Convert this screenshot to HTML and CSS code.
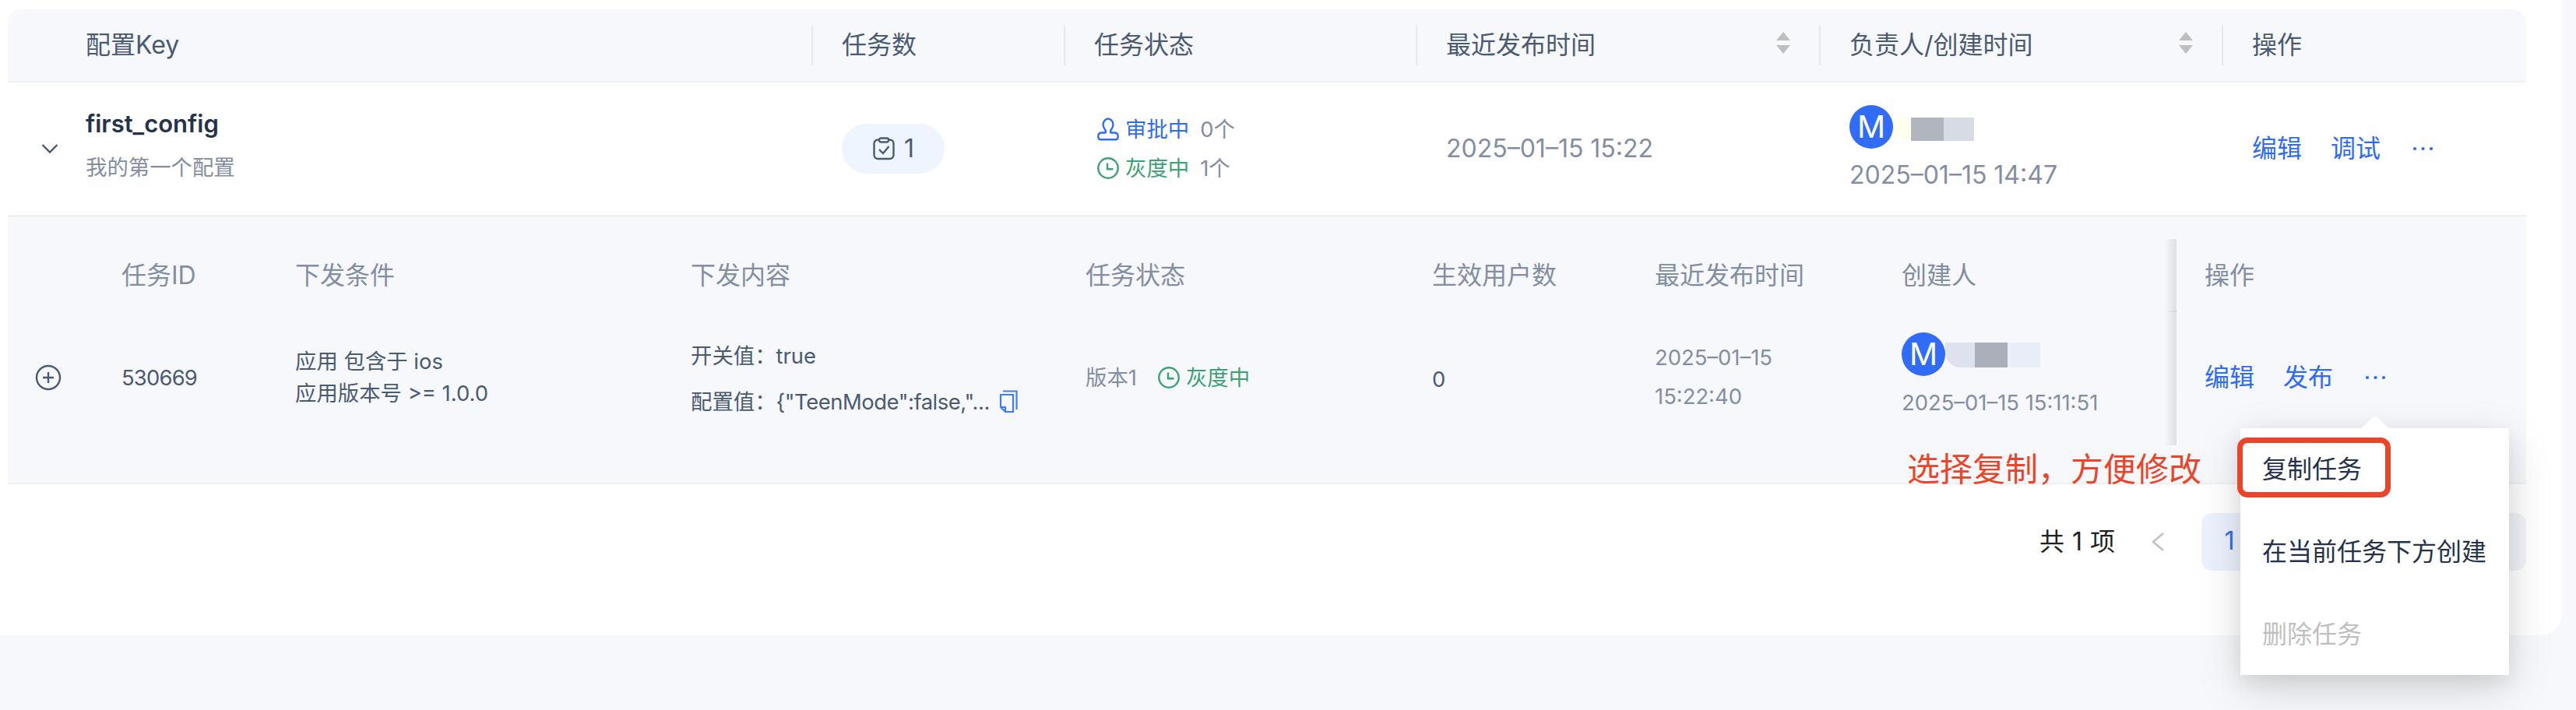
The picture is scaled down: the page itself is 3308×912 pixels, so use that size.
FILE: index.html
```
<!DOCTYPE html>
<html lang="zh-CN">
<head>
    <meta charset="UTF-8">
    <meta name="viewport" content="width=device-width, initial-scale=1.0">
    <title>配置列表</title>
    <link rel="stylesheet" href="styles.css">
</head>
<body>
    <svg class="sprite" width="0" height="0">
        <symbol id="icon-clock" viewBox="0 0 28 28">
            <circle cx="14" cy="14" r="12.7" />
            <path d="M13 7.5v7.7h7.5" />
        </symbol>
        <symbol id="icon-sort" viewBox="0 0 18 28">
            <path d="M9 0l9 11H0z M0 17h18L9 28z" />
        </symbol>
        <symbol id="icon-more" viewBox="0 0 28 6">
            <circle cx="3" cy="3" r="2.1" />
            <circle cx="13.5" cy="3" r="2.1" />
            <circle cx="24" cy="3" r="2.1" />
        </symbol>
    </svg>
    <main class="card">
        <section class="table">
            <div class="row head">
                <div></div>
                <div class="th first">配置Key</div>
                <div class="th">任务数</div>
                <div class="th">任务状态</div>
                <div class="th">最近发布时间 <svg class="sort"><use href="#icon-sort" /></svg></div>
                <div class="th">负责人/创建时间 <svg class="sort"><use href="#icon-sort" /></svg></div>
                <div class="th">操作</div>
            </div>
            <div class="row config">
                <div class="expand">
                    <svg width="22" height="14" viewBox="0 0 22 14"><path d="M1.5 2L11 11.5 20.5 2" /></svg>
                </div>
                <div class="key">
                    <div class="name">first_config</div>
                    <div class="desc">我的第一个配置</div>
                </div>
                <div class="td">
                    <span class="pill">
                        <svg width="28" height="30" viewBox="0 0 28 30">
                            <path d="M8 3.5H6.5a5 5 0 0 0-5 5v14.500a5 5 0 0 0 5 5h15a5 5 0 0 0 5-5V8.500a5 5 0 0 0-5-5H20" />
                            <rect x="8" y="1.500" width="12" height="5" rx="2.200" />
                            <path d="M8 16l5 5 7.500-9" />
                        </svg>
                        1
                    </span>
                </div>
                <div class="td states">
                    <div class="state blue">
                        <svg width="28" height="30" viewBox="0 0 28 30">
                            <path d="M10.500 19.500c1.200-1.600.7-2.700-.9-4.700-1.200-1.600-2-3.400-2-5.600a6.400 7.700 0 0 1 12.800 0c0 2.200-.8 4-2 5.600-1.600 2-2.100 3.100-.9 4.700h4.500c2.800 0 4.700 1.800 4.700 4.500 0 3-1.300 4.300-3.200 4.300h-19c-1.900 0-3.200-1.300-3.200-4.300 0-2.700 1.900-4.500 4.700-4.500z" />
                        </svg>
                        <b>审批中</b><span>0个</span>
                    </div>
                    <div class="state green">
                        <svg width="28" height="28"><use href="#icon-clock" /></svg>
                        <b>灰度中</b><span>1个</span>
                    </div>
                </div>
                <div class="td date">2025–01–15 15:22</div>
                <div class="td owner">
                    <div class="user"><span class="avatar">M</span><i class="mask mask-a"></i></div>
                    <div class="date">2025–01–15 14:47</div>
                </div>
                <div class="td links">
                    <a>编辑</a><a>调试</a><svg class="more config-more"><use href="#icon-more" /></svg>
                </div>
            </div>

            <div class="nested">
                <div class="sub sub-head">
                    <div></div>
                    <div>任务ID</div>
                    <div>下发条件</div>
                    <div>下发内容</div>
                    <div>任务状态</div>
                    <div>生效用户数</div>
                    <div>最近发布时间</div>
                    <div>创建人</div>
                    <div class="fixed">操作</div>
                </div>
                <div class="sub sub-body">
                    <div class="plus">
                        <svg width="34" height="34" viewBox="0 0 34 34"><circle cx="17" cy="17" r="15" /><path d="M17 10v14M10 17h14" /></svg>
                    </div>
                    <div class="task-id">530669</div>
                    <div class="rules">
                        <p>应用 包含于 ios</p>
                        <p>应用版本号 &gt;= 1.0.0</p>
                    </div>
                    <div class="content">
                        <p>开关值：<span>true</span></p>
                        <p>配置值：<span class="json">{"TeenMode":false,"...</span>
                            <svg class="copy" width="24" height="30" viewBox="0 0 24 30">
                                <path d="M2 6h16v22H8l-6-6z M2 22h6v6 M5 1.500h17.500V25" />
                            </svg>
                        </p>
                    </div>
                    <div class="version">
                        <span>版本1</span>
                        <div class="state green"><svg width="28" height="28"><use href="#icon-clock" /></svg><b>灰度中</b></div>
                    </div>
                    <div class="count">0</div>
                    <div class="publish">
                        <p>2025–01–15</p>
                        <p>15:22:40</p>
                    </div>
                    <div class="creator">
                        <div class="user"><span class="avatar">M</span><i class="mask mask-b"></i></div>
                        <div class="date-sm">2025–01–15 15:11:51</div>
                    </div>
                    <div class="fixed links">
                        <a>编辑</a><a>发布</a>
                        <div class="more-wrap">
                            <svg class="more"><use href="#icon-more" /></svg>
                            <ul class="menu">
                                <li>复制任务</li>
                                <li>在当前任务下方创建</li>
                                <li class="disabled">删除任务</li>
                            </ul>
                        </div>
                    </div>
                </div>
                <div class="shade"></div>
            </div>
        </section>

        <footer class="pager">
            <span class="total">共 1 项</span>
            <svg class="prev" width="18" height="26" viewBox="0 0 18 26"><path d="M16 2L3 13l13 11" /></svg>
            <span class="page">1</span>
            <span class="size"></span>
        </footer>
    </main>
    <div class="tip">选择复制，方便修改</div>
    <div class="mark"></div>
</body>
</html>
```
FILE: styles.css
```
* {
    box-sizing: border-box;
}
body {
    margin: 0;
    height: 912px;
    overflow: hidden;
    position: relative;
    background: #f6f8fc;
    font-family: Inter, "Noto Sans CJK SC", sans-serif;
    font-size: 32px;
    line-height: 40px;
    color: #4b5a73;
}
p, ul {
    margin: 0;
    padding: 0;
}
svg {
    fill: none;
    stroke: currentColor;
    stroke-width: 2.4;
    flex: none;
}
.sprite {
    position: absolute;
}
.card {
    width: 3290px;
    height: 816px;
    padding: 12px 46px 0 10px;
    background: #fff;
    border-radius: 0 0 28px 0;
}
.row {
    display: grid;
    grid-template-columns: 100px 932px 324px 452px 518px 517px 391px;
    align-items: center;
}
.head {
    height: 94px;
    background: #f6f8fc;
    border-bottom: 2px solid #eff0f1;
    border-radius: 18px 18px 0 0;
}
.th {
    display: flex;
    justify-content: space-between;
    align-items: center;
    height: 52px;
    padding: 0 37px 0 37px;
    border-left: 2px solid #e6e8ec;
}
.th.first {
    padding-left: 0;
    border-left: 0;
}
.sort {
    width: 18px;
    height: 28px;
    margin-top: -6px;
    fill: #bfbfbf;
    stroke: none;
}
.config {
    height: 173px;
    border-bottom: 3px solid #f0f2f2;
}
.td {
    padding-left: 39px;
}
.expand {
    display: flex;
    padding-left: 43px;
}
.name {
    margin-top: -8px;
    font-size: 31px;
    font-weight: 600;
    color: #24324c;
}
.desc {
    margin-top: 16px;
    font-size: 27.4px;
    color: #838ea3;
}
.pill {
    display: flex;
    align-items: center;
    gap: 12px;
    width: 132px;
    height: 64px;
    padding-left: 40px;
    border-radius: 32px;
    background: #eff5ff;
}
.states {
    display: flex;
    flex-direction: column;
    gap: 10px;
}
.state {
    display: flex;
    align-items: center;
    font-size: 27.4px;
}
.state svg {
    margin: 0 8px 0 4px;
}
.state b {
    font-weight: 400;
}
.state span {
    margin-left: 14px;
    color: #838ea3;
}
.blue {
    color: #2e6bf6;
}
.green {
    color: #3ba272;
}
.date {
    color: #838ea3;
}
.user {
    display: flex;
    align-items: center;
    height: 56px;
}
.owner {
    margin-top: -3px;
}
.owner .date {
    margin-top: 14px;
}
.avatar {
    width: 56px;
    height: 56px;
    border-radius: 50%;
    background: #306cf8;
    color: #fff;
    font-size: 40px;
    line-height: 56px;
    text-align: center;
}
.mask-a {
    width: 104px;
    height: 30px;
    margin-top: 7px;
    border-radius: 0 0 0 18px;
    background: linear-gradient(90deg, #fffff0 23px, #b1b5be 23px, #b1b5be 65px, #d7dbe4 65px);
}
.mask-b {
    width: 122px;
    height: 32px;
    margin-top: 2px;
    border-radius: 0 0 0 20px;
    background: linear-gradient(90deg, #dee2ee 38px, #abafb9 38px, #abafb9 80px, #e8edf8 80px);
}
.links {
    display: flex;
    align-items: center;
    color: #2e6bf6;
}
.links a {
    margin-right: 37px;
}
.more {
    display: block;
    width: 28px;
    height: 6px;
    fill: currentColor;
    stroke: none;
}
.config-more {
    margin-left: 4px;
}
.nested {
    position: relative;
    height: 343px;
    padding-top: 28px;
    background: #f6f8fc;
    border-bottom: 2px solid #eff0f1;
}
.sub {
    display: grid;
    grid-template-columns: 146px 223px 508px 507px 445px 286px 317px 352px 450px;
    align-items: center;
}
.sub-head {
    height: 93px;
    color: #838ea3;
}
.sub-body {
    height: 170px;
    font-size: 27.4px;
}
.fixed {
    padding-left: 37px;
    font-size: 32px;
}
.shade {
    position: absolute;
    left: 2769px;
    top: 28px;
    width: 16px;
    height: 265px;
    background: linear-gradient(90deg, rgba(0, 0, 0, 0), rgba(0, 0, 0, 0.1));
}
.shade::after {
    content: "";
    display: block;
    height: 2px;
    margin-top: 92px;
    background: linear-gradient(90deg, rgba(0, 0, 0, 0), rgba(0, 0, 0, 0.08));
}
.plus {
    padding-left: 35px;
    display: flex;
}
.task-id {
    letter-spacing: -0.8px;
}
.rules p {
    line-height: 41px;
}
.content p {
    display: flex;
    align-items: center;
    height: 59px;
}
.content {
    padding-top: 2px;
}
.json {
    letter-spacing: -0.45px;
}
.copy {
    margin-left: 12px;
    color: #3f7cfb;
    stroke-width: 2.2;
}
.version {
    display: flex;
    align-items: center;
    gap: 23px;
    color: #838ea3;
}
.count {
    padding-top: 4px;
}
.publish {
    margin-top: -2px;
    color: #838ea3;
}
.publish p {
    line-height: 50px;
}
.creator {
    margin-top: -7px;
}
.date-sm {
    margin-top: 14px;
    color: #838ea3;
}
.more-wrap {
    position: relative;
    margin-left: 4px;
}
.menu {
    position: absolute;
    z-index: 2;
    left: -160px;
    top: 68px;
    width: 345px;
    height: 317px;
    list-style: none;
    background: #fff;
    color: #24324c;
    box-shadow: 0 18px 56px rgba(0, 0, 0, 0.14), 0 8px 24px rgba(0, 0, 0, 0.08);
}
.menu::before {
    content: "";
    position: absolute;
    left: 153px;
    top: -15px;
    width: 40px;
    height: 16px;
    background: #fff;
    clip-path: polygon(0 100%, 12% 82%, 42% 8%, 50% 0, 58% 8%, 88% 82%, 100% 100%);
}
.menu li {
    height: 106px;
    padding-left: 28px;
    line-height: 106px;
    white-space: nowrap;
}
.menu .disabled {
    color: #bfbfbf;
}
.pager {
    display: flex;
    align-items: center;
    justify-content: flex-end;
    height: 74px;
    margin-top: 37px;
}
.total {
    color: #222;
    word-spacing: 1px;
}
.prev {
    margin: 0 47px 0 46px;
    color: #bfbfbf;
}
.page {
    width: 72px;
    height: 74px;
    border-radius: 14px;
    background: #ebf2fe;
    color: #2e6bf6;
    line-height: 72px;
    text-align: center;
}
.size {
    width: 220px;
    height: 74px;
    margin-left: 125px;
    border-radius: 14px;
    background: #f0f3f8;
}
/* 红色标注 */
.tip {
    position: absolute;
    left: 2449px;
    top: 573px;
    font-size: 42px;
    line-height: 60px;
    color: #ec4429;
}
.mark {
    position: absolute;
    z-index: 3;
    left: 2873px;
    top: 562px;
    width: 197px;
    height: 77px;
    border: 7px solid #ec4429;
    border-radius: 13px;
}
```
